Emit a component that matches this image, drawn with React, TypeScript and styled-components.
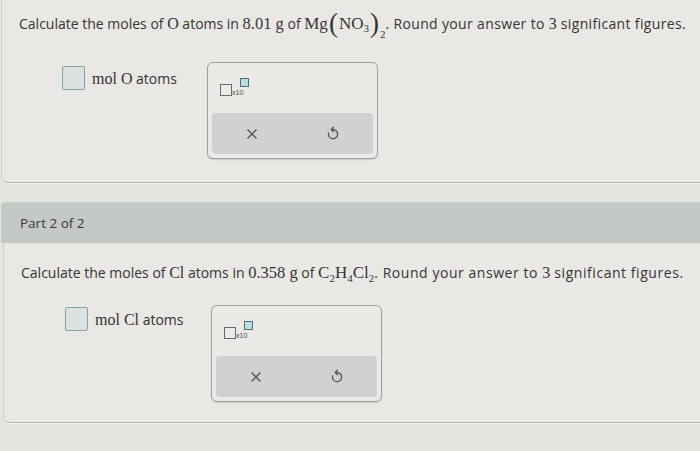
import React from "react";
import styled, { createGlobalStyle } from "styled-components";

const GlobalStyle = createGlobalStyle`
  html, body { margin: 0; padding: 0; }
  body {
    background: #e6e4e0;
    width: 700px;
    height: 451px;
    overflow: hidden;
    font-family: "Open Sans", "Liberation Sans", sans-serif;
    color: #353535;
  }
`;

const Page = styled.div`
  width: 700px;
  height: 451px;
  display: flex;
  flex-direction: column;
  overflow: hidden;
`;

const Card = styled.section<{ $indent: number; $height: number; $pad: number }>`
  margin-left: ${(p) => p.$indent}px;
  width: calc(100% + 20px);
  height: ${(p) => p.$height}px;
  box-sizing: border-box;
  border-left: 1px solid #cfcdc8;
  border-bottom: 1px solid #bbb9b5;
  border-bottom-left-radius: 6px;
  background: #e9e8e4;
  padding-top: ${(p) => p.$pad}px;
  box-shadow: 0 1px 0 #f3f2ef;
`;

const PartBar = styled.div`
  margin-top: 19px;
  margin-left: 1px;
  height: 41px;
  background: #c4c8c7;
  border-top-left-radius: 4px;
  display: flex;
  align-items: center;
  padding-left: 19px;
  font-size: 13.5px;
  color: #383a3a;
`;

const Question = styled.p<{ $left: number }>`
  margin: 0;
  padding-left: ${(p) => p.$left}px;
  font-size: 14px;
  line-height: 20px;
  white-space: nowrap;
`;

const Tail = styled.span<{ $spacing: number }>`
  letter-spacing: ${(p) => p.$spacing}px;
`;

const M = styled.span<{ $size?: number }>`
  font-family: "Liberation Serif", "DejaVu Serif", serif;
  font-size: ${(p) => p.$size ?? 16}px;
  letter-spacing: 0;
`;

const Sub = styled.sub<{ $drop?: number }>`
  font-size: 11px;
  vertical-align: baseline;
  position: relative;
  top: ${(p) => p.$drop ?? 4}px;
  line-height: 0;
`;

const BigParen = styled.span`
  font-family: "Liberation Serif", serif;
  font-size: 27px;
  line-height: 0;
  position: relative;
  top: 3px;
  margin: 0 1px;
`;

const Row = styled.div<{ $left: number; $top: number }>`
  display: flex;
  align-items: flex-start;
  padding-left: ${(p) => p.$left}px;
  margin-top: ${(p) => p.$top}px;
`;

const AnswerGroup = styled.div<{ $width: number; $drop: number }>`
  width: ${(p) => p.$width}px;
  display: flex;
  align-items: center;
  gap: 7px;
  margin-top: ${(p) => p.$drop}px;
`;

const InputBox = styled.div`
  width: 21px;
  height: 22px;
  border: 1px solid #7fa5a5;
  border-radius: 2px;
  background: #dbe2e1;
  flex: none;
`;

const Label = styled.span`
  font-size: 14px;
  white-space: nowrap;
  color: #333;
`;

const Palette = styled.div`
  width: 171px;
  height: 97px;
  box-sizing: border-box;
  border: 1px solid #9e9e9c;
  border-radius: 6px;
  background: #ebeae7;
  display: flex;
  flex-direction: column;
  justify-content: space-between;
  padding: 0 4px 4px 4px;
  box-shadow: 0 1px 1px rgba(0, 0, 0, 0.12);
`;

const SciWrap = styled.div`
  position: relative;
  width: 32px;
  height: 20px;
  margin: 15px 0 0 8px;
`;

const SciBase = styled.div`
  position: absolute;
  left: 0;
  top: 6px;
  width: 10px;
  height: 10px;
  border: 1.5px solid #6a6a6a;
`;

const SciExp = styled.div`
  position: absolute;
  left: 20px;
  top: 0;
  width: 7px;
  height: 7px;
  border: 1.3px solid #4c6e74;
  background: #b9dde2;
`;

const SciText = styled.span`
  position: absolute;
  left: 12px;
  top: 11px;
  font-size: 7px;
  line-height: 8px;
  color: #444;
  font-family: "Liberation Sans", sans-serif;
`;

const ButtonStrip = styled.div`
  height: 41px;
  border-radius: 4px;
  background: #d1d1cf;
  display: flex;
`;

const ToolButton = styled.button`
  flex: 1;
  border: none;
  background: transparent;
  display: flex;
  align-items: center;
  justify-content: center;
  padding: 0;
  color: #555;
`;

const CrossIcon = () => (
  <svg width="12" height="12" viewBox="0 0 12 12">
    <path d="M1.5 1.5 L10.5 10.5 M10.5 1.5 L1.5 10.5" stroke="#555" strokeWidth="1.4" fill="none" />
  </svg>
);

const UndoIcon = () => (
  <svg width="13" height="15" viewBox="0 0 13 15">
    <path
      d="M5.5 3.5 H7 A4.6 4.6 0 1 1 2.6 6.8"
      stroke="#555"
      strokeWidth="1.3"
      fill="none"
      strokeLinecap="round"
    />
    <path d="M7.4 1.3 L5.3 3.5 L7.4 5.7" stroke="#555" strokeWidth="1.3" fill="none" strokeLinecap="round" strokeLinejoin="round" />
  </svg>
);

const ToolPalette = () => (
  <Palette>
    <SciWrap>
      <SciBase />
      <SciText>x10</SciText>
      <SciExp />
    </SciWrap>
    <ButtonStrip>
      <ToolButton aria-label="clear">
        <CrossIcon />
      </ToolButton>
      <ToolButton aria-label="undo">
        <UndoIcon />
      </ToolButton>
    </ButtonStrip>
  </Palette>
);

export default function App() {
  return (
    <Page>
      <GlobalStyle />
      <Card $indent={1} $height={183} $pad={14}>
        <Question $left={17}>
          Calculate the moles of <M>O</M> atoms in <M $size={16.5}>8.01 g</M> of{" "}
          <M $size={17}>
            Mg<BigParen>(</BigParen>NO<Sub $drop={3}>3</Sub>
            <BigParen>)</BigParen>
            <Sub $drop={9}>2</Sub>
          </M>
          <Tail $spacing={0.35}>
            . Round your answer to <M>3</M> significant figures.
          </Tail>
        </Question>
        <Row $left={60} $top={28}>
          <AnswerGroup $width={145} $drop={4}>
            <InputBox />
            <Label>
              <M>mol O</M> atoms
            </Label>
          </AnswerGroup>
          <ToolPalette />
        </Row>
      </Card>
      <PartBar>Part 2 of 2</PartBar>
      <Card $indent={3} $height={180} $pad={20}>
        <Question $left={17}>
          Calculate the moles of <M>Cl</M> atoms in <M $size={16.5}>0.358 g</M> of{" "}
          <M $size={17}>
            C<Sub>2</Sub>H<Sub>4</Sub>Cl<Sub>2</Sub>
          </M>
          <Tail $spacing={0.55}>
            . Round your answer to <M>3</M> significant figures.
          </Tail>
        </Question>
        <Row $left={61} $top={22}>
          <AnswerGroup $width={146} $drop={2}>
            <InputBox />
            <Label>
              <M>mol Cl</M> atoms
            </Label>
          </AnswerGroup>
          <ToolPalette />
        </Row>
      </Card>
    </Page>
  );
}
